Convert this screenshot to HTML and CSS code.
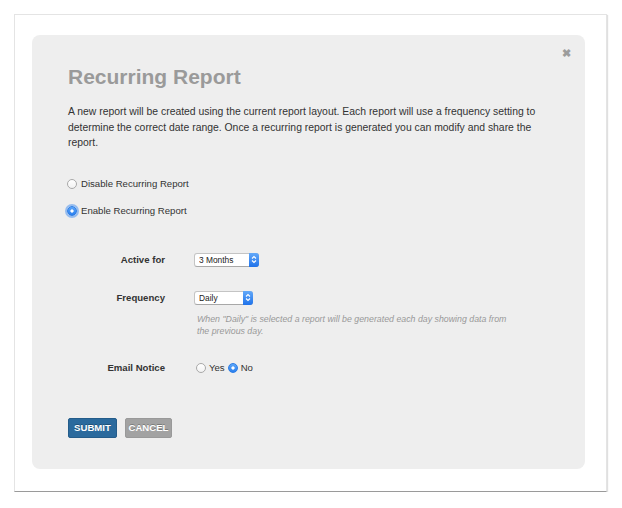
FILE: index.html
```html
<!DOCTYPE html>
<html>
<head>
    <meta name="viewport" content="width=device-width, initial-scale=1">
    <title>Recurring Report</title>
    <link rel="stylesheet" href="styles.css">
</head>
<body>

    <div class="frame">
        <div class="modal">
            <span class="close">&#10006;</span>

            <h2>Recurring Report</h2>

            <p class="intro">A new report will be created using the current report layout. Each report will use a frequency setting to determine the correct date range. Once a recurring report is generated you can modify and share the report.</p>

            <label class="choice first">
                <input type="radio" name="recurring" value="off">
                <span>Disable Recurring Report</span>
            </label>
            <label class="choice">
                <input type="radio" name="recurring" value="on" class="focused" checked>
                <span>Enable Recurring Report</span>
            </label>

            <div class="row active">
                <label class="rowLabel" for="active">Active for</label>
                <div class="field">
                    <span class="selectBox wide">
                        <select id="active">
                            <option>3 Months</option>
                            <option>6 Months</option>
                            <option>12 Months</option>
                        </select>
                        <span class="stepper">
                            <svg width="6" height="9" viewBox="0 0 6 9"><path d="M1 3.5 L3 1.5 L5 3.5 M1 5.5 L3 7.5 L5 5.5" fill="none" stroke="#fff" stroke-width="1.1"/></svg>
                        </span>
                    </span>
                </div>
            </div>

            <div class="row frequency">
                <label class="rowLabel" for="freq">Frequency</label>
                <div class="field">
                    <span class="selectBox">
                        <select id="freq">
                            <option>Daily</option>
                            <option>Weekly</option>
                            <option>Monthly</option>
                        </select>
                        <span class="stepper">
                            <svg width="6" height="9" viewBox="0 0 6 9"><path d="M1 3.5 L3 1.5 L5 3.5 M1 5.5 L3 7.5 L5 5.5" fill="none" stroke="#fff" stroke-width="1.1"/></svg>
                        </span>
                    </span>
                    <p class="help">When "Daily" is selected a report will be generated each day showing data from the previous day.</p>
                </div>
            </div>

            <div class="row email">
                <span class="rowLabel">Email Notice</span>
                <div class="field inline">
                    <label class="opt"><input type="radio" name="email" value="yes"> Yes</label>
                    <label class="opt"><input type="radio" name="email" value="no" checked> No</label>
                </div>
            </div>

            <div class="buttons">
                <button type="button" class="submitbtn">Submit</button>
                <button type="button" class="cancelbtn">Cancel</button>
            </div>
        </div>
    </div>

</body>
</html>
```

FILE: styles.css
```css
body {
    margin: 0;
    background-color: #fff;
    font-family: "Liberation Sans", Arial, Helvetica, sans-serif;
    color: #333;
}

.frame {
    margin: 14px 0 0 14px;
    width: 593px;
    height: 478px;
    padding: 20px 21px 0 17px;
    box-sizing: border-box;
    border: 1px solid #e4e4e4;
    border-bottom-color: #9a9a9a;
    box-shadow: 1px 1px 1px rgba(0, 0, 0, 0.12);
}

.modal {
    position: relative;
    height: 434px;
    padding: 30px 36px 0 36px;
    box-sizing: border-box;
    background-color: #eeeeee;
    border-radius: 8px;
}

.close {
    position: absolute;
    top: 12px;
    right: 14px;
    font-size: 11px;
    font-weight: bold;
    color: #9c9c9c;
}

h2 {
    margin: 0;
    font-size: 21px;
    line-height: 24px;
    color: #9a9a9a;
}

.intro {
    margin: 15px 0 0 0;
    font-size: 10.4px;
    line-height: 15.5px;
    color: #333;
}

/* radios */
input[type=radio] {
    appearance: none;
    -webkit-appearance: none;
    width: 10px;
    height: 10px;
    margin: 0;
    border: 1px solid #a9a9a9;
    border-radius: 50%;
    background: linear-gradient(#ffffff, #f2f2f2);
    box-sizing: border-box;
    flex: none;
}

    input[type=radio]:checked {
        border-color: #2c7de6;
        background: radial-gradient(circle, #fff 0, #fff 1.4px, transparent 1.8px), linear-gradient(#5ea6f8, #2a80ef);
    }

    input[type=radio].focused {
        box-shadow: 0 0 0 2px rgba(76, 148, 240, 0.55);
    }

.choice {
    display: flex;
    align-items: center;
    gap: 4px;
    height: 14px;
    margin-top: 13px;
    margin-left: -1px;
    font-size: 9.6px;
}

    .choice.first {
        margin-top: 26px;
    }

/* form rows */
.row {
    display: flex;
    align-items: flex-start;
}

.rowLabel {
    width: 97px;
    flex: none;
    text-align: right;
    font-size: 9.6px;
    font-weight: bold;
    line-height: 16px;
    color: #333;
}

.field {
    margin-left: 29px;
}

    .field.inline {
        display: flex;
        align-items: center;
        height: 16px;
        margin-left: 31px;
    }

.row.active {
    margin-top: 34px;
}

.row.frequency {
    margin-top: 22px;
}

.row.email {
    margin-top: 23px;
}

.selectBox {
    position: relative;
    display: block;
    width: 59px;
    height: 14px;
    margin-top: 1px;
}

    .selectBox.wide {
        width: 65px;
    }

select {
    appearance: none;
    -webkit-appearance: none;
    display: block;
    width: 100%;
    height: 14px;
    margin: 0;
    padding: 0 0 0 4px;
    border: 1px solid #c4c4c4;
    border-bottom-color: #a8a8a8;
    border-radius: 3px;
    background-color: #fff;
    font-family: "Liberation Sans", Arial, Helvetica, sans-serif;
    font-size: 8.4px;
    color: #222;
    box-sizing: border-box;
}

.stepper {
    position: absolute;
    top: 0;
    right: 0;
    width: 10px;
    height: 14px;
    display: flex;
    align-items: center;
    justify-content: center;
    border-radius: 0 3px 3px 0;
    background: linear-gradient(#63a9f9, #1f72ea);
}

.help {
    width: 318px;
    margin: 8px 0 0 3px;
    font-size: 8.8px;
    font-style: italic;
    line-height: 12px;
    color: #999;
}

.opt {
    display: flex;
    align-items: center;
    gap: 3px;
    margin-right: 3px;
    font-size: 9.6px;
    color: #333;
}

/* buttons */
.buttons {
    display: flex;
    gap: 8px;
    margin-top: 42px;
}

button {
    height: 20px;
    margin: 0;
    padding: 0;
    border-radius: 2px;
    font-family: "Liberation Sans", Arial, Helvetica, sans-serif;
    font-size: 9.6px;
    font-weight: bold;
    text-transform: uppercase;
    color: #fff;
    text-shadow: 0 -1px 0 rgba(0, 0, 0, 0.25);
}

.submitbtn {
    width: 49px;
    background-color: #2b6a9d;
    border: 1px solid #245c8a;
}

.cancelbtn {
    width: 47px;
    background-color: #a2a2a2;
    border: 1px solid #999;
}
```
